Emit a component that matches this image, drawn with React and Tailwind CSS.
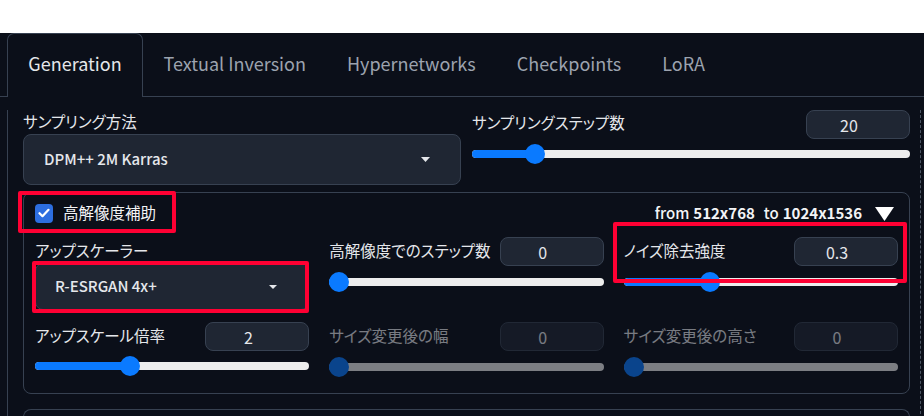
import React from "react";

function Slider({ frac }) {
  const left = `calc(${frac} * (100% - 20px))`;
  const fill = `calc(${frac} * (100% - 20px) + 10px)`;
  return (
    <div className="relative h-[20px] w-full">
      <div className="absolute inset-x-0 top-[6px] h-[8px] rounded-full bg-[#ededed]" />
      <div className="absolute left-0 top-[6px] h-[8px] rounded-l-full bg-[#0a7aff]" style={{ width: fill }} />
      <div className="absolute top-0 h-[20px] w-[20px] rounded-full bg-[#0a7aff]" style={{ left }} />
    </div>
  );
}

function NumBox({ value }) {
  return (
    <div className="flex h-[29px] w-[104px] shrink-0 items-center justify-center rounded-[8px] border border-[#374151] bg-[#1f2633] pr-[18px] text-[16px] text-[#e5e7eb]">
      {value}
    </div>
  );
}

function SliderField({ label, value, frac, disabled }) {
  return (
    <div className={disabled ? "flex flex-col opacity-50" : "flex flex-col"}>
      <div className="flex items-start justify-between">
        <span className="text-[15.5px] leading-[26px] text-[#e5e7eb] [font-feature-settings:'palt']">{label}</span>
        <NumBox value={value} />
      </div>
      <div className="mt-[6px]">
        <Slider frac={frac} />
      </div>
    </div>
  );
}

function Caret({ w, h }) {
  return (
    <svg width={w} height={h} viewBox={`0 0 ${w} ${h}`}>
      <polygon points={`0,0 ${w},0 ${w / 2},${h}`} fill="#e5e7eb" />
    </svg>
  );
}

export default function App() {
  return (
    <div className="relative h-[416px] w-[924px] overflow-hidden bg-white font-['Noto_Sans_CJK_JP','Noto_Sans',sans-serif]">
      <div className="h-[33px] bg-white" />
      <div className="h-[383px] bg-[#0b0f19]">
        {/* tabs */}
        <div className="flex h-[64px]">
          <div className="w-[7px] border-b border-[#374151]" />
          <div className="flex w-[136px] items-center justify-center rounded-t-[7px] border-x border-t border-[#374151] pb-[4px] text-[18px] text-[#e5e7eb]">
            Generation
          </div>
          <div className="flex flex-1 items-center border-b border-[#374151] pb-[3px] text-[18px] text-[#9ca3af]">
            <span className="px-[20.5px]">Textual Inversion</span>
            <span className="px-[20.5px]">Hypernetworks</span>
            <span className="px-[20.5px]">Checkpoints</span>
            <span className="px-[20.5px]">LoRA</span>
          </div>
        </div>
        {/* panel */}
        <div className="ml-[7px] h-[320px] border-l border-[#374151] pl-[15px]">
          <div className="mt-[13px] w-[898px] border-r border-dashed border-[#4b5563] pr-[10px]">
            {/* top row */}
            <div className="flex gap-[11px]">
              <div className="flex w-[438px] flex-col">
                <div className="-mt-[2px] h-[26px] text-[15.5px] leading-[26px] text-[#e5e7eb] [font-feature-settings:'palt']">
                  サンプリング方法
                </div>
                <div className="flex h-[51px] items-center justify-between rounded-[8px] border border-[#374151] bg-[#1f2633] pl-[20px] pr-[30px]">
                  <span className="text-[15px] font-medium text-[#e5e7eb]">DPM++ 2M Karras</span>
                  <Caret w={9} h={5} />
                </div>
              </div>
              <div className="flex w-[438px] flex-col">
                <div className="flex items-start justify-between">
                  <span className="text-[15.5px] leading-[24px] text-[#e5e7eb] [font-feature-settings:'palt']">
                    サンプリングステップ数
                  </span>
                  <NumBox value="20" />
                </div>
                <div className="mt-[5px]">
                  <Slider frac={19 / 149} />
                </div>
              </div>
            </div>
            {/* hires box */}
            <div className="mt-[7px] h-[202px] rounded-[8px] border border-[#374151] px-[11px] pt-[10px]">
              <div className="flex h-[20px] items-center justify-between">
                <div className="flex items-center gap-[10px]">
                  <div className="flex h-[19px] w-[18px] items-center justify-center rounded-[4px] bg-[#2d6ee0]">
                    <svg width="12" height="10" viewBox="0 0 12 10">
                      <path d="M1.5 5.2l3 3 6-6.4" stroke="#ffffff" strokeWidth="2.2" fill="none" strokeLinecap="round" strokeLinejoin="round" />
                    </svg>
                  </div>
                  <span className="text-[15.5px] text-[#f3f4f6]">高解像度補助</span>
                </div>
                <div className="flex items-center pr-[4px] text-[15px] text-[#f3f4f6]">
                  <span className="font-medium">from</span>
                  <span className="ml-[4px] font-bold">512x768</span>
                  <span className="ml-[9px] font-medium">to</span>
                  <span className="ml-[4px] font-bold">1024x1536</span>
                  <span className="ml-[13px] mt-[2px]">
                    <svg width="19" height="14" viewBox="0 0 19 14">
                      <polygon points="0,0 19,0 9.5,14" fill="#ffffff" />
                    </svg>
                  </span>
                </div>
              </div>
              <div className="mt-[14px] grid grid-cols-3 gap-x-[20px] gap-y-[12px]">
                <div className="flex flex-col">
                  <div className="h-[26px] text-[15.5px] leading-[26px] text-[#e5e7eb] [font-feature-settings:'palt']">
                    アップスケーラー
                  </div>
                  <div className="flex h-[47px] items-center justify-between rounded-[8px] border border-[#374151] bg-[#1f2633] pl-[19px] pr-[31px]">
                    <span className="text-[15px] font-medium text-[#e5e7eb]">R-ESRGAN 4x+</span>
                    <Caret w={8} h={4} />
                  </div>
                </div>
                <SliderField label="高解像度でのステップ数" value="0" frac={0} />
                <SliderField label="ノイズ除去強度" value="0.3" frac={0.3} />
                <div className="flex flex-col">
                  <div className="flex items-start justify-between">
                    <span className="text-[15.5px] leading-[26px] text-[#e5e7eb] [font-feature-settings:'palt']">アップスケール倍率</span>
                    <NumBox value="2" />
                  </div>
                  <div className="mt-[5px]">
                    <Slider frac={1 / 3} />
                  </div>
                </div>
                <SliderField label="サイズ変更後の幅" value="0" frac={0} disabled />
                <SliderField label="サイズ変更後の高さ" value="0" frac={0} disabled />
              </div>
            </div>
            <div className="mt-[15px] h-[20px] rounded-t-[8px] border-x border-t border-[#374151]" />
          </div>
        </div>
      </div>
      {/* annotation boxes */}
      <div className="absolute left-[18px] top-[191px] h-[42px] w-[158px] rounded-[2px] border-4 border-[#ff0033]" />
      <div className="absolute left-[32px] top-[261px] h-[52px] w-[277px] rounded-[2px] border-4 border-[#ff0033]" />
      <div className="absolute left-[613px] top-[222px] h-[61px] w-[294px] rounded-[2px] border-4 border-[#ff0033]" />
    </div>
  );
}
